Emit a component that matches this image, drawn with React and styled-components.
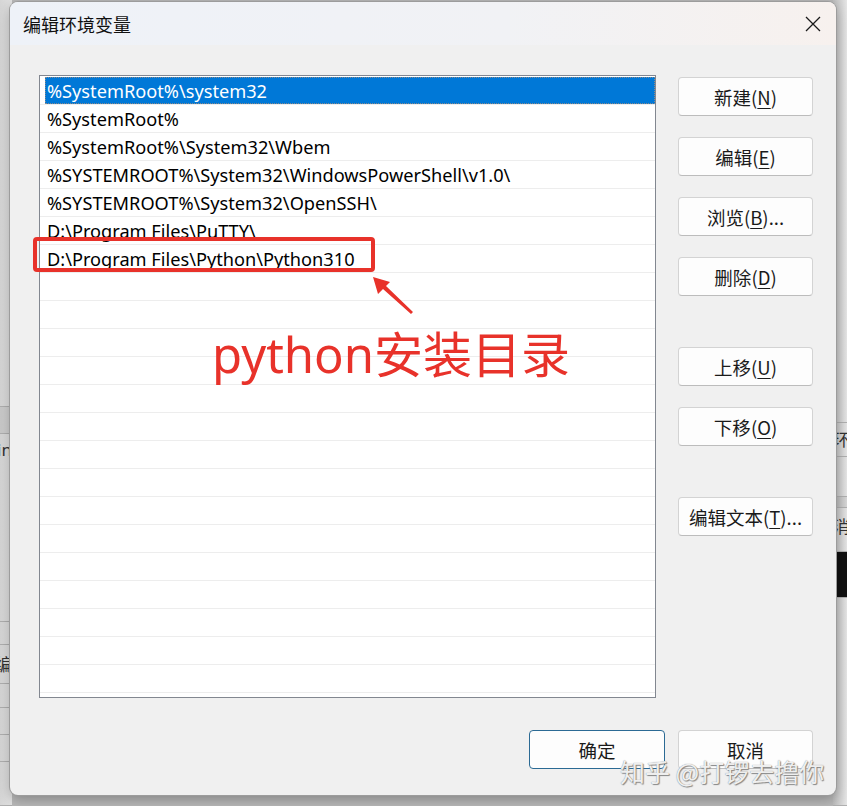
import React from 'react';
import styled, { createGlobalStyle } from 'styled-components';

const GlobalStyle = createGlobalStyle`
  html, body {
    margin: 0;
    padding: 0;
    overflow: hidden;
  }
  body {
    font-family: "Noto Sans", "Noto Sans CJK SC", sans-serif;
  }
`;

const PATHS = [
  '%SystemRoot%\\system32',
  '%SystemRoot%',
  '%SystemRoot%\\System32\\Wbem',
  '%SYSTEMROOT%\\System32\\WindowsPowerShell\\v1.0\\',
  '%SYSTEMROOT%\\System32\\OpenSSH\\',
  'D:\\Program Files\\PuTTY\\',
  'D:\\Program Files\\Python\\Python310',
];

const TOTAL_ROWS = 22;

const SIDE_BUTTONS = [
  [
    { label: '新建', key: 'N' },
    { label: '编辑', key: 'E' },
    { label: '浏览', key: 'B', tail: '...' },
    { label: '删除', key: 'D' },
  ],
  [
    { label: '上移', key: 'U' },
    { label: '下移', key: 'O' },
  ],
  [{ label: '编辑文本', key: 'T', tail: '...' }],
];

// bits of the window behind the dialog, top to bottom
const BACK_LEFT = [
  { h: 407 }, { h: 27, band: true }, { h: 188, text: 'in', pad: 6 }, { h: 23 },
  { h: 39, text: '编', pad: 10 }, { h: 24 }, { h: 27 }, { h: 27 }, { h: 44 },
];

const BACK_RIGHT = [
  { h: 423 }, { h: 34, text: '环', pad: 7 }, { h: 40 }, { h: 11, band: true },
  { h: 44, text: '消', pad: 9 }, { h: 46, dark: true }, { h: 208 },
];

export default function App() {
  const rows = Array.from({ length: TOTAL_ROWS }, (_, i) => PATHS[i] || '');

  return (
    <>
      <GlobalStyle />
      <Desktop>
        <BackWindow>
          <BackColumn $side="left">
            {BACK_LEFT.map((c, i) => (
              <BackCell key={i} $h={c.h} $pad={c.pad} $band={c.band} $align="flex-end">
                {c.text}
              </BackCell>
            ))}
          </BackColumn>
          <BackColumn $side="right">
            {BACK_RIGHT.map((c, i) => (
              <BackCell key={i} $h={c.h} $pad={c.pad} $band={c.band} $dark={c.dark} $align="flex-start">
                {c.text}
              </BackCell>
            ))}
          </BackColumn>
        </BackWindow>

        <Dialog>
          <TitleBar>
            <Title>编辑环境变量</Title>
            <CloseButton aria-label="关闭">
              <svg width="16" height="16" viewBox="0 0 16 16">
                <path d="M1 1 L15 15 M15 1 L1 15" stroke="#1a1a1a" strokeWidth="1.3" fill="none" />
              </svg>
            </CloseButton>
          </TitleBar>

          <Body>
            <MainRow>
              <PathList>
                {rows.map((text, i) => (
                  <PathRow key={i}>
                    <PathLabel $selected={i === 0}>{text}</PathLabel>
                  </PathRow>
                ))}
              </PathList>

              <SideColumn>
                {SIDE_BUTTONS.map((group, gi) => (
                  <ButtonGroup key={gi}>
                    {group.map(b => (
                      <DialogButton key={b.key}>
                        {b.label}(<u>{b.key}</u>){b.tail}
                      </DialogButton>
                    ))}
                  </ButtonGroup>
                ))}
              </SideColumn>
            </MainRow>

            <Footer>
              <DialogButton $primary>确定</DialogButton>
              <DialogButton>取消</DialogButton>
            </Footer>
          </Body>
        </Dialog>

        {/* red annotation drawn over the screenshot */}
        <MarkBox />
        <Arrow width="60" height="50" viewBox="0 0 60 50">
          <path d="M3 3 L20 8 L16 12 L43 38 L41 40 L13 15 L8 20 Z" fill="#e8322a" />
        </Arrow>
        <MarkText>python安装目录</MarkText>
        <Watermark>知乎 @打锣去撸你</Watermark>
      </Desktop>
    </>
  );
}

const Desktop = styled.div`
  position: relative;
  width: 847px;
  height: 806px;
  overflow: hidden;
  background: #b9b9b9;
`;

const BackWindow = styled.div`
  display: flex;
  justify-content: space-between;
  height: 100%;
`;

const BackColumn = styled.div`
  display: flex;
  flex-direction: column;
  width: ${p => (p.$side === 'left' ? 12 : 14)}px;
  overflow: hidden;
  background: ${p =>
    p.$side === 'left'
      ? 'linear-gradient(to right, #d6d6d6, #e4e4e4)'
      : 'linear-gradient(to right, #bdbdbd, #e6e6e6)'};
`;

const BackCell = styled.div`
  display: flex;
  justify-content: ${p => p.$align};
  align-items: flex-start;
  flex: 0 0 ${p => p.$h}px;
  box-sizing: border-box;
  padding-top: ${p => p.$pad || 0}px;
  border-bottom: 1px solid #b0b0b0;
  background: ${p => (p.$dark ? '#111' : p.$band ? 'rgba(0, 0, 0, 0.06)' : 'transparent')};
  font-family: "Noto Sans", "Noto Sans CJK SC", sans-serif;
  font-size: 17px;
  line-height: 20px;
  color: #333;
  white-space: nowrap;
`;

const Dialog = styled.div`
  position: absolute;
  left: 10px;
  top: 2px;
  width: 826px;
  height: 793px;
  display: flex;
  flex-direction: column;
  border-radius: 8px;
  overflow: hidden;
  background: #f0f0f0;
  box-shadow: 0 0 0 1px #9c9c9c, 0 4px 14px rgba(0, 0, 0, 0.3);
`;

const TitleBar = styled.div`
  display: flex;
  align-items: center;
  justify-content: space-between;
  height: 43px;
  padding-left: 13px;
  background: linear-gradient(to right, #eef2f8, #f1f2f5 60%, #f7f1ee);
`;

const Title = styled.span`
  font-family: "Noto Sans CJK SC", sans-serif;
  font-size: 18px;
  color: #111;
`;

const CloseButton = styled.button`
  display: flex;
  align-items: center;
  justify-content: center;
  width: 46px;
  height: 43px;
  border: none;
  padding: 0;
  background: transparent;
`;

const Body = styled.div`
  display: flex;
  flex-direction: column;
  gap: 32px;
  padding: 30px 23px 26px 29px;
`;

const MainRow = styled.div`
  display: flex;
  gap: 22px;
`;

const PathList = styled.div`
  box-sizing: border-box;
  width: 617px;
  height: 623px;
  padding-top: 1px;
  border: 1px solid #828790;
  background: #fff;
  overflow: hidden;
`;

const PathRow = styled.div`
  display: flex;
  box-sizing: border-box;
  height: 28px;
  padding-left: 5px;
  border-bottom: 1px solid #ededed;
`;

const PathLabel = styled.div`
  flex: 1;
  display: flex;
  align-items: center;
  padding-left: 2px;
  font-family: "Noto Sans", sans-serif;
  font-size: 18.2px;
  white-space: nowrap;
  color: ${p => (p.$selected ? '#fff' : '#000')};
  background: ${p => (p.$selected ? '#0078d7' : 'transparent')};
  outline: ${p => (p.$selected ? '1px dotted #8a8a8a' : 'none')};
  outline-offset: -1px;
`;

const SideColumn = styled.div`
  display: flex;
  flex-direction: column;
  gap: 51px;
  padding-top: 2px;
`;

const ButtonGroup = styled.div`
  display: flex;
  flex-direction: column;
  gap: 21px;
`;

const DialogButton = styled.button`
  box-sizing: border-box;
  width: ${p => (p.$primary ? 136 : 135)}px;
  height: 39px;
  padding: 0;
  border: 1px solid ${p => (p.$primary ? '#2b6a94' : '#d3d3d3')};
  border-bottom-color: ${p => (p.$primary ? '#2b6a94' : '#bcbcbc')};
  border-radius: 4px;
  background: #fdfdfd;
  font-family: "Noto Sans CJK SC", sans-serif;
  font-size: 18.5px;
  color: #1a1a1a;

  u {
    text-underline-offset: 3px;
  }
`;

const Footer = styled.div`
  display: flex;
  justify-content: flex-end;
  gap: 13px;
`;

const MarkBox = styled.div`
  position: absolute;
  left: 33px;
  top: 237px;
  width: 342px;
  height: 35px;
  box-sizing: border-box;
  border: 4px solid #e8322a;
  border-radius: 4px;
`;

const Arrow = styled.svg`
  position: absolute;
  left: 370px;
  top: 274px;
`;

const MarkText = styled.div`
  position: absolute;
  left: 212px;
  top: 328px;
  font-family: "Noto Sans", "Noto Sans CJK SC", sans-serif;
  font-size: 49px;
  line-height: 1.1;
  color: #e8322a;
  white-space: nowrap;
`;

const Watermark = styled.div`
  position: absolute;
  left: 620px;
  top: 753px;
  font-family: "Noto Sans CJK SC", sans-serif;
  font-size: 25px;
  color: rgba(255, 255, 255, 0.9);
  text-shadow: 0 0 1px #777, 1px 1px 1px #888;
  white-space: nowrap;
`;
